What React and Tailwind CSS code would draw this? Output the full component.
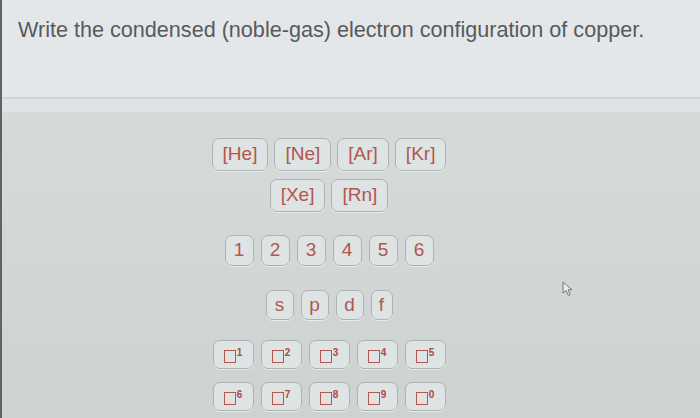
import React from "react";

const nobles = [["[He]", "[Ne]", "[Ar]", "[Kr]"], ["[Xe]", "[Rn]"]];
const levels = ["1", "2", "3", "4", "5", "6"];
const orbitals = ["s", "p", "d", "f"];
const supers = [["1", "2", "3", "4", "5"], ["6", "7", "8", "9", "0"]];

const keyClass =
  "flex items-center justify-center rounded-[7px] border border-[#adb3b3] bg-[#dee3e4] text-[#b3564d] shadow-[0_1px_0_rgba(255,255,255,0.5)]";

const Cursor = () => (
  <svg width="13" height="16" viewBox="0 0 13 16" className="absolute left-[560px] top-[281px]">
    <path d="M1 1 L1 12 L4 9.5 L6.3 14.5 L8.2 13.6 L6 8.8 L10 8.8 Z" fill="#e9eced" stroke="#6f7475" strokeWidth="1" strokeLinejoin="round" />
  </svg>
);

const App = () => {
  return (
    <div className="relative w-[700px] h-[418px] overflow-hidden border-l-[2px] border-[#5f6363] bg-[#d4d9d8] font-['Liberation_Sans',Arial,sans-serif]">
      {/* question */}
      <div className="h-[97px] bg-[#e3e7ea] pl-[16px] pt-[18px]">
        <p className="text-[21.6px] leading-[24px] text-[#575a5c]">
          Write the condensed (noble-gas) electron configuration of copper.
        </p>
      </div>
      <div className="h-[2px] bg-[#cfd4d6]" />
      <div className="h-[13px] bg-[#dfe3e5]" />

      {/* answer palette */}
      <div className="flex flex-col items-center pr-[44px] pt-[26px] bg-gradient-to-b from-[#d6dbda] to-[#cdd3d1] h-[306px]">
        <div className="flex flex-col items-center gap-[8px]">
          {nobles.map((row, i) => (
            <div key={i} className="flex gap-[6px]">
              {row.map((n) => (
                <div key={n} className={`${keyClass} h-[33px] px-[10px] text-[19px]`}>
                  {n}
                </div>
              ))}
            </div>
          ))}
        </div>

        <div className="flex gap-[7px] mt-[23px]">
          {levels.map((n) => (
            <div key={n} className={`${keyClass} h-[31px] w-[29px] text-[19px]`}>
              {n}
            </div>
          ))}
        </div>

        <div className="flex gap-[7px] mt-[24px]">
          {orbitals.map((n) => (
            <div key={n} className={`${keyClass} h-[30px] ${n === "f" ? "w-[22px]" : "w-[28px]"} text-[19px]`}>
              {n}
            </div>
          ))}
        </div>

        <div className="flex flex-col gap-[13px] mt-[20px]">
          {supers.map((row, i) => (
            <div key={i} className="flex gap-[7px]">
              {row.map((n) => (
                <div key={n} className={`${keyClass} h-[29px] w-[41px]`}>
                  <span className="relative inline-block w-[12px] h-[13px] border border-[#b3564d] mt-[3px]" />
                  <span className="text-[10px] leading-none font-bold text-[#a84b43] self-start mt-[7px] ml-[1px]">{n}</span>
                </div>
              ))}
            </div>
          ))}
        </div>
      </div>

      <Cursor />
    </div>
  );
};

export default App;
